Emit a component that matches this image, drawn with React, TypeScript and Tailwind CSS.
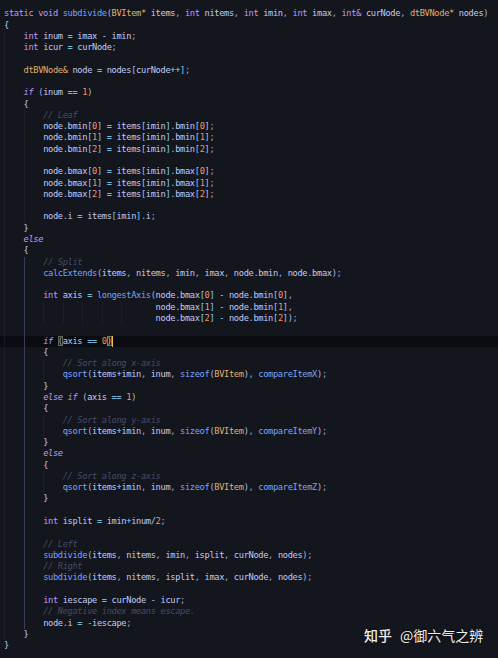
import * as React from "react";

const code = `static void subdivide(BVItem* items, int nitems, int imin, int imax, int& curNode, dtBVNode* nodes)
{
    int inum = imax - imin;
    int icur = curNode;

    dtBVNode& node = nodes[curNode++];

    if (inum == 1)
    {
        // Leaf
        node.bmin[0] = items[imin].bmin[0];
        node.bmin[1] = items[imin].bmin[1];
        node.bmin[2] = items[imin].bmin[2];

        node.bmax[0] = items[imin].bmax[0];
        node.bmax[1] = items[imin].bmax[1];
        node.bmax[2] = items[imin].bmax[2];

        node.i = items[imin].i;
    }
    else
    {
        // Split
        calcExtends(items, nitems, imin, imax, node.bmin, node.bmax);

        int axis = longestAxis(node.bmax[0] - node.bmin[0],
                               node.bmax[1] - node.bmin[1],
                               node.bmax[2] - node.bmin[2]);

        if (axis == 0)
        {
            // Sort along x-axis
            qsort(items+imin, inum, sizeof(BVItem), compareItemX);
        }
        else if (axis == 1)
        {
            // Sort along y-axis
            qsort(items+imin, inum, sizeof(BVItem), compareItemY);
        }
        else
        {
            // Sort along z-axis
            qsort(items+imin, inum, sizeof(BVItem), compareItemZ);
        }

        int isplit = imin+inum/2;

        // Left
        subdivide(items, nitems, imin, isplit, curNode, nodes);
        // Right
        subdivide(items, nitems, isplit, imax, curNode, nodes);

        int iescape = curNode - icur;
        // Negative index means escape.
        node.i = -iescape;
    }
}`;

const lines = code.split("\n");

// cursor sits on "if (axis == 0)"
const CURSOR_LINE = 29;

const keywords = new Set(["static", "void", "int"]);
const control = new Set(["if", "else"]);
const types = new Set(["BVItem", "dtBVNode"]);
const funcs = new Set([
    "subdivide",
    "calcExtends",
    "longestAxis",
    "qsort",
    "sizeof",
    "compareItemX",
    "compareItemY",
    "compareItemZ",
]);

type Token = { text: string; cls: string };

function tokenize(src: string): Token[] {
    const out: Token[] = [];
    const ci = src.indexOf("//");
    const body = ci >= 0 ? src.slice(0, ci) : src;
    const parts = body.match(/\s+|[A-Za-z_]\w*|\d+|==|\+\+|[^\sA-Za-z_\d]/g) || [];
    let prev = "";
    for (const p of parts) {
        let cls = "text-[#c0caf5]";
        if (/^\s+$/.test(p)) {
            out.push({ text: p, cls: "" });
            continue;
        }
        if (keywords.has(p)) cls = "text-[#bb9af7]";
        else if (control.has(p)) cls = "text-[#bb9af7] italic";
        else if (types.has(p)) cls = "text-[#e0af68]";
        else if (funcs.has(p)) cls = "text-[#7aa2f7]";
        else if (/^\d+$/.test(p)) cls = "text-[#ff8f5e]";
        else if (p === "(" || p === ")") cls = "text-[#a9b8e8]";
        else if (p === "[" || p === "]") cls = "text-[#7dcfff]";
        else if (p === "*" || p === "&") {
            if (types.has(prev)) cls = "text-[#e0af68]";
            else if (keywords.has(prev)) cls = "text-[#bb9af7]";
            else cls = "text-[#89ddff]";
        } else if (["=", "==", "-", "+", "++", "/"].includes(p)) cls = "text-[#89ddff]";
        else if (p === "," || p === ";") cls = "text-[#9aa5ce]";
        else if (p === ".") cls = "text-[#a9b1d6]";
        out.push({ text: p, cls });
        prev = p;
    }
    if (ci >= 0) out.push({ text: src.slice(ci), cls: "text-[#454b68] italic" });
    return out;
}

function indentOf(s: string) {
    return s.length - s.trimStart().length;
}

// guide levels for blank lines follow the code around them
function guideCount(i: number): number {
    const s = lines[i];
    if (s.trim() !== "") return Math.floor(indentOf(s) / 4);
    let a = i - 1;
    while (a >= 0 && lines[a].trim() === "") a--;
    let b = i + 1;
    while (b < lines.length && lines[b].trim() === "") b++;
    const up = a >= 0 ? Math.floor(indentOf(lines[a]) / 4) : 0;
    const down = b < lines.length ? Math.floor(indentOf(lines[b]) / 4) : 0;
    return Math.min(up, down);
}

function CodeLine({ src, index }: { src: string; index: number }) {
    const guides = guideCount(index);
    const rest = src.trim() === "" ? "" : src.slice(guides * 4);
    const isCursor = index === CURSOR_LINE;
    const tokens = tokenize(rest);

    return (
        <div
            className={
                "h-[11.29px] whitespace-pre pl-[4px] leading-[11.29px] " +
                (isCursor ? "bg-[#0b0c11]" : "")
            }
        >
            {Array.from({ length: guides }).map((_, g) => {
                const active = g === 1 && index >= 22 && index <= 54;
                return (
                    <span
                        key={g}
                        className={
                            "inline-block h-[11.29px] align-top " +
                            (active
                                ? "shadow-[inset_1px_0_0_#3a3f55]"
                                : "shadow-[inset_1px_0_0_#23263286]")
                        }
                    >
                        {"    "}
                    </span>
                );
            })}
            {isCursor ? (
                <>
                    <span className="text-[#bb9af7] italic">if</span>
                    <span> </span>
                    <span className="text-[#a9b8e8] outline outline-1 -outline-offset-1 outline-[#5d6b58]">(</span>
                    <span className="text-[#c0caf5]">axis</span>
                    <span> </span>
                    <span className="text-[#89ddff]">==</span>
                    <span> </span>
                    <span className="text-[#ff8f5e]">0</span>
                    <span className="text-[#e8d080] outline outline-1 -outline-offset-1 outline-[#8a7a40]">)</span>
                    <span className="inline-block h-[11px] w-[1.5px] bg-[#e0c060] align-top" />
                </>
            ) : (
                tokens.map((t, k) => (
                    <span key={k} className={t.cls}>
                        {t.text}
                    </span>
                ))
            )}
        </div>
    );
}

export default function App() {
    return (
        <div className="relative h-[658px] w-full overflow-hidden bg-[#14161e]">
            <div className="pt-[8.4px] font-['DejaVu_Sans_Mono',monospace] text-[8.7px] tracking-[-0.34px]">
                {lines.map((l, i) => (
                    <CodeLine key={i} src={l} index={i} />
                ))}
            </div>
            <div className="absolute left-[364px] top-[625px] flex items-center gap-[8px] font-['Noto_Sans_CJK_SC',sans-serif] text-[14px] leading-[20px] text-[#ececec] [text-shadow:0_0_2px_rgba(0,0,0,0.6)]">
                <span className="font-medium">知乎</span>
                <span>@御六气之辨</span>
            </div>
        </div>
    );
}
